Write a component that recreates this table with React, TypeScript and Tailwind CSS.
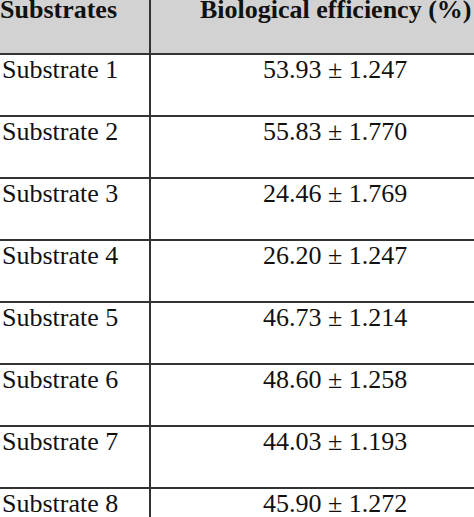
const rows = [
  ["Substrate 1", "53.93 ± 1.247"],
  ["Substrate 2", "55.83 ± 1.770"],
  ["Substrate 3", "24.46 ± 1.769"],
  ["Substrate 4", "26.20 ± 1.247"],
  ["Substrate 5", "46.73 ± 1.214"],
  ["Substrate 6", "48.60 ± 1.258"],
  ["Substrate 7", "44.03 ± 1.193"],
  ["Substrate 8", "45.90 ± 1.272"],
];

export default function App() {
  return (
    <div className="w-[474px] h-[517px] overflow-hidden bg-white text-[#111] font-['Liberation_Serif',serif] text-[26px] leading-[30px]">
      {/* header */}
      <div className="flex h-[55px] bg-[#d2d2d2] border-b-2 border-[#333]">
        <div className="w-[151px] shrink-0 border-r-2 border-[#333] font-bold leading-[20px]">
          Substrates
        </div>
        <div className="flex-1 font-bold leading-[20px] pl-[49px] whitespace-nowrap">
          Biological efficiency (%)
        </div>
      </div>

      {rows.map(([name, value]) => (
        <div key={name} className="flex h-[62px] border-b-2 border-[#333]">
          <div className="w-[151px] shrink-0 border-r-2 border-[#333] pl-[2px]">
            {name}
          </div>
          <div className="flex-1 pl-[112px] whitespace-nowrap">{value}</div>
        </div>
      ))}
    </div>
  );
}
